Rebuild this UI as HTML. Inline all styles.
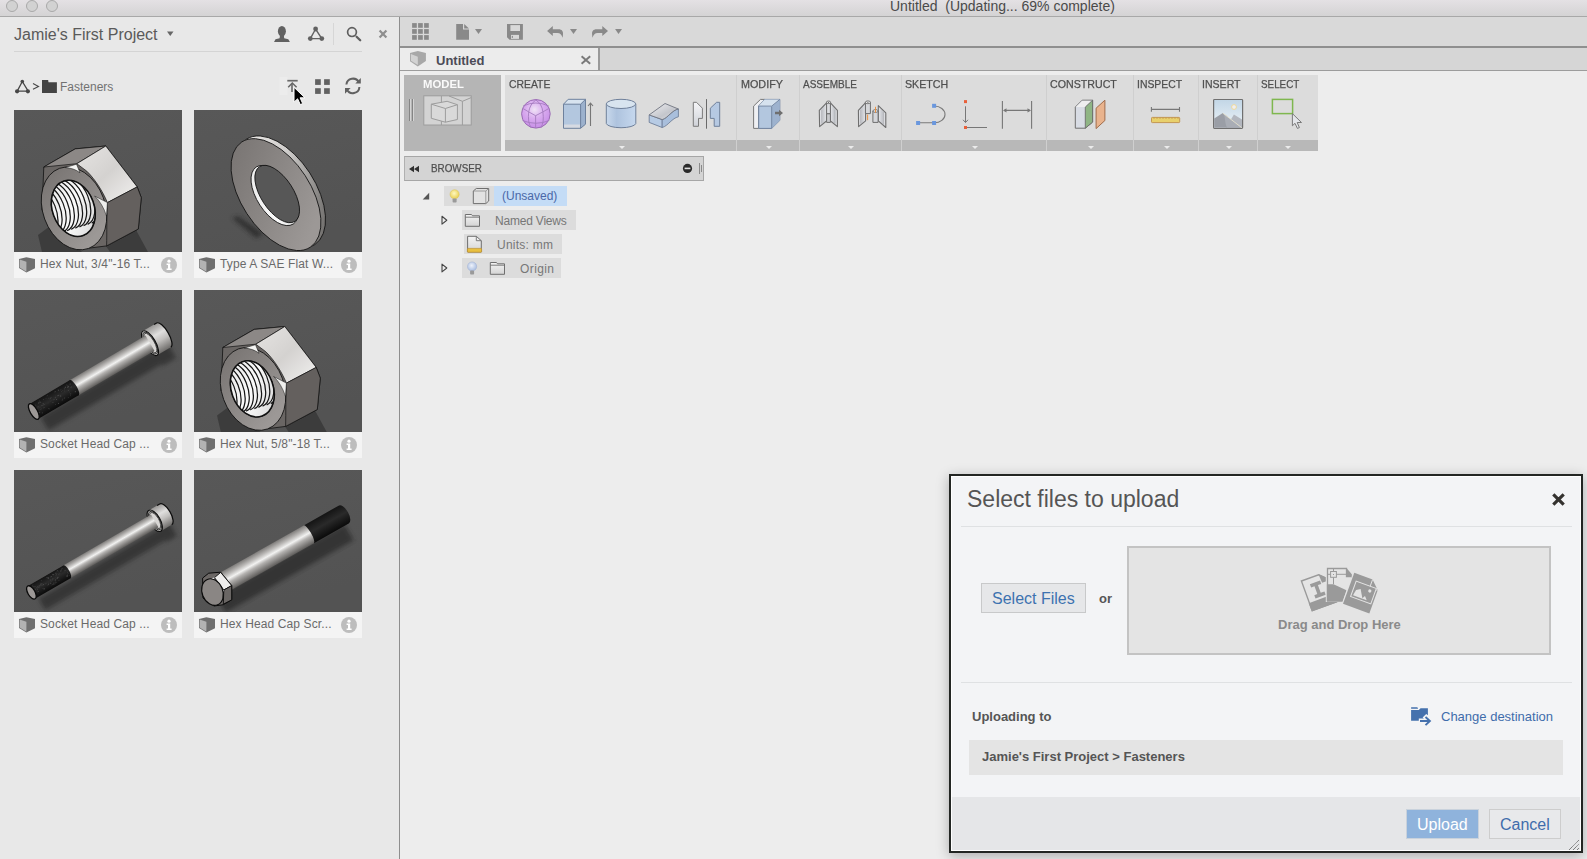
<!DOCTYPE html>
<html><head><meta charset="utf-8">
<style>
*{box-sizing:border-box;margin:0;padding:0}
html,body{width:1587px;height:859px;overflow:hidden;background:#ededed;font-family:"Liberation Sans",sans-serif;position:relative}
div,svg{position:absolute}
.t{white-space:pre;line-height:1}
#titlebar{left:0;top:0;width:1587px;height:17px;background:linear-gradient(#e4e1e4,#d4d3d4);border-bottom:1px solid #a8a8a8}
.tl{top:0;width:12px;height:12px;border-radius:50%;border:1px solid #a9a9a9;background:#d2d2d2}
#left{left:0;top:17px;width:400px;height:842px;background:#e8e8e8;border-right:1px solid #8e8e8e}
#tbar{left:400px;top:17px;width:1187px;height:31px;background:#d9d9d9;border-bottom:2px solid #8f8f8f}
#tabrow{left:400px;top:48px;width:1187px;height:23px;background:#d6d6d6;border-bottom:1px solid #9c9c9c}
#tab{left:0;top:0;width:200px;height:22px;background:#ececec;border-right:2px solid #9a9a9a}
.lbl{font-size:11px;color:#4f4f4f;-webkit-text-stroke:0.25px #4f4f4f;white-space:pre;line-height:1}
.thumb{width:168px;height:168px;background:#f4f4f4}
.thumb .img{left:0;top:0;width:168px;height:142px;background:#565656;overflow:hidden}
.thumb .cap{left:26px;top:148px;font-size:12px;letter-spacing:0.12px;color:#6a6a6a;white-space:pre;line-height:1}
.thumb .cube{left:5px;top:147px}
.thumb .info{left:147px;top:147px;width:16px;height:16px;border-radius:50%;background:#bdbdbd}
.pnl{top:75px;height:76px;background:#dcdcdc}
.pnl .bb{left:0;bottom:0;width:100%;height:11px;background:#b8b8b8}
.pnl .ar{bottom:2.5px;width:0;height:0;border-left:3px solid transparent;border-right:3px solid transparent;border-top:3.6px solid #ebebeb}
.bt{font-size:12px;color:#7a7a7a;white-space:pre;line-height:1}
</style></head><body>
<div id="titlebar">
<div class="tl" style="left:6px"></div><div class="tl" style="left:26px"></div><div class="tl" style="left:46px"></div>
<div class="t" style="left:890px;top:-1px;font-size:14px;color:#4a4a4a">Untitled  (Updating... 69% complete)</div>
</div>
<div id="left"></div>
<div class="t" style="left:14px;top:27px;font-size:16px;color:#5a5a5a">Jamie's First Project</div>
<svg style="left:164px;top:28px" width="12" height="10" viewBox="0 0 12 10"><path d="M3 3.5 H9.5 L6.25 8 Z" fill="#666"/></svg>
<svg style="left:270px;top:22px" width="125" height="26" viewBox="270 22 125 26">
 <ellipse cx="281.9" cy="31.2" rx="4" ry="5.2" fill="#616161"/>
 <path d="M280 35 H283.8 L284.2 38.2 L288.3 39.2 L289.9 41.9 H274 L275.5 39.2 L279.6 38.2 Z" fill="#616161"/>
 <path d="M315.6 29 L310.3 38.6 H321.8 Z" fill="none" stroke="#616161" stroke-width="1.4"/>
 <circle cx="315.6" cy="29" r="2.4" fill="#616161"/><circle cx="310.3" cy="38.6" r="2.4" fill="#616161"/><circle cx="321.8" cy="38.6" r="2.4" fill="#616161"/>
 <rect x="333" y="23" width="1" height="22" fill="#d6d6d6"/>
 <circle cx="352" cy="32.1" r="4.4" fill="none" stroke="#5e5e5e" stroke-width="1.7"/>
 <path d="M356.6 36.8 L360.2 40.3" stroke="#5e5e5e" stroke-width="2.3" stroke-linecap="round"/>
 <path d="M379.6 30.4 L386.4 37.6 M386.4 30.4 L379.6 37.6" stroke="#8e8e8e" stroke-width="2.2"/>
</svg>
<svg style="left:10px;top:75px" width="360" height="30" viewBox="10 75 360 30">
 <path d="M22.3 81.5 L17.2 91.2 H28.2 Z" fill="none" stroke="#474747" stroke-width="1.3"/>
 <circle cx="22.3" cy="81.5" r="1.8" fill="#474747"/><circle cx="17.1" cy="91.3" r="2.1" fill="#474747"/><circle cx="27.9" cy="91.3" r="2.1" fill="#474747"/>
 <path d="M33 83.6 L38.5 86.4 L33 89.2" fill="none" stroke="#474747" stroke-width="1.1"/>
 <path d="M42 80 H48 L49.3 82.2 H56.9 V92.9 H42 Z" fill="#444"/>
 <path d="M48 80 L49.5 82.2 L48.5 82.2 Z" fill="#e8e8e8"/>
 <rect x="279.5" y="77" width="8" height="18" fill="#ececec"/>
 <path d="M287.3 80.7 H297.7" stroke="#6a6a6a" stroke-width="1.7"/>
 <path d="M288.2 87.2 L292.3 83 L296.6 87.2" fill="none" stroke="#666" stroke-width="1.5"/><path d="M292 83.4 V92" stroke="#666" stroke-width="1.6"/>
 <rect x="315.1" y="79.2" width="5.7" height="5.7" fill="#616161"/><rect x="324.1" y="79.2" width="5.7" height="5.7" fill="#616161"/>
 <rect x="315.1" y="88.2" width="5.7" height="5.7" fill="#616161"/><rect x="324.1" y="88.2" width="5.7" height="5.7" fill="#616161"/>
 <path d="M346.4 84.5 A6.6 6.6 0 0 1 358.8 82.2" fill="none" stroke="#616161" stroke-width="2"/>
 <path d="M360.8 78 V83.6 H355.3 Z" fill="#616161"/>
 <path d="M359.4 87 A6.6 6.6 0 0 1 346.9 89.5" fill="none" stroke="#616161" stroke-width="2"/>
 <path d="M345 93.8 V88 H350.6 Z" fill="#616161"/>
</svg>
<div style="left:14px;top:51px;width:348px;height:1px;background:#d4d4d4"></div>
<div class="t" style="left:60px;top:81px;font-size:12px;color:#727272">Fasteners</div>
<div class="thumb" style="left:14px;top:110px"><div class="img"><svg width="168" height="142" viewBox="0 0 168 142" style="left:0;top:0"><defs>
<linearGradient id="tbg" x1="0" y1="0" x2="0.3" y2="1"><stop offset="0" stop-color="#585858"/><stop offset="1" stop-color="#535353"/></linearGradient>
<filter id="blura" x="-20%" y="-20%" width="140%" height="140%"><feGaussianBlur stdDeviation="2.2"/></filter>
<linearGradient id="shafta" x1="0" y1="0" x2="0" y2="1"><stop offset="0" stop-color="#7e7c7a"/><stop offset="0.25" stop-color="#bcbab8"/><stop offset="0.45" stop-color="#f2f2f1"/><stop offset="0.62" stop-color="#b4b2b0"/><stop offset="1" stop-color="#5e5c5a"/></linearGradient>
<linearGradient id="heada" x1="0" y1="0" x2="0" y2="1"><stop offset="0" stop-color="#9a9896"/><stop offset="0.35" stop-color="#e0dfde"/><stop offset="0.6" stop-color="#c2c0be"/><stop offset="1" stop-color="#6e6c6a"/></linearGradient>
<linearGradient id="thra" x1="0" y1="0" x2="0" y2="1"><stop offset="0" stop-color="#141414"/><stop offset="0.45" stop-color="#2a2a2a"/><stop offset="1" stop-color="#0a0a0a"/></linearGradient>
<linearGradient id="topfa" x1="0" y1="0" x2="1" y2="1"><stop offset="0" stop-color="#e6e4e2"/><stop offset="0.5" stop-color="#d4d2d0"/><stop offset="1" stop-color="#f2f1f0"/></linearGradient>
<linearGradient id="wfacea" x1="0" y1="0" x2="0.4" y2="1"><stop offset="0" stop-color="#75716f"/><stop offset="1" stop-color="#9c9896"/></linearGradient>
<linearGradient id="wedgea" x1="0.3" y1="0" x2="0.9" y2="1"><stop offset="0" stop-color="#f0eeec"/><stop offset="0.45" stop-color="#d0cecc"/><stop offset="0.7" stop-color="#9a9896"/><stop offset="1" stop-color="#5a5856"/></linearGradient>
<linearGradient id="holea" x1="0" y1="0" x2="1" y2="1"><stop offset="0" stop-color="#e8e8e8"/><stop offset="0.5" stop-color="#fafafa"/><stop offset="1" stop-color="#d0d0d0"/></linearGradient>
<clipPath id="hca"><ellipse cx="59.3" cy="98.4" rx="20.9" ry="28.9" transform="rotate(-20 59.3 98.4)"/></clipPath>
</defs><rect width="168" height="142" fill="url(#tbg)"/><g transform="translate(0,0)"><path d="M24 125 L39.5 113.5 L68 142 L28 142 Z" fill="#3c3c3c"/><path d="M92 136 L122 120 L134 142 L96 142 Z" fill="#3c3c3c"/><path d="M29.8 57 L61.2 38.9 L91.8 36 L123.2 76.9 L127.3 87.6 L124.3 119 L92.6 135.9 L62.8 139.7 L28 100 Z" fill="#6a6664" stroke="#111" stroke-width="0.8" stroke-linejoin="round"/><path d="M29.8 57 L61.2 38.9 L91.8 36 L62.8 53.7 Z" fill="#8c8886" stroke="#111" stroke-width="0.7"/><path d="M62.8 53.7 L91.8 36 L123.2 76.9 L93.4 92.6 C90 84 82 70 72.8 61.2 Z" fill="url(#topfa)" stroke="#111" stroke-width="0.7"/><path d="M93.4 92.6 L123.2 76.9 L127.3 87.6 L124.3 119 L92.6 135.9 C93 122 92.5 105 93.4 92.6 Z" fill="#64605e" stroke="#111" stroke-width="0.7"/><ellipse cx="60" cy="98.4" rx="31.2" ry="42.6" transform="rotate(-20 60 98.4)" fill="url(#wfacea)" stroke="#111" stroke-width="0.8"/><path d="M51.2 57.6 L62.5 54.2 L66 62.8 C62 59.5 56.5 57.8 51.2 57.6 Z" fill="#f4f4f2" stroke="#111" stroke-width="0.5"/><path d="M80.6 86 L93.4 92.6 L92.5 106 C90 98 86 91 80.6 86 Z" fill="#efefed" stroke="#111" stroke-width="0.5"/><ellipse cx="59.3" cy="98.4" rx="20.9" ry="28.9" transform="rotate(-20 59.3 98.4)" fill="#f0f0f0" stroke="#111" stroke-width="0.9"/><g clip-path="url(#hca)" fill="none" stroke="#161616" stroke-width="1.25"><ellipse cx="59.3" cy="98.4" rx="20.9" ry="28.9" transform="rotate(-20 59.3 98.4)" fill="url(#holea)" stroke="none"/><path d="M27.0 75.5 A15 26 0 0 1 27.0 127.5" transform="rotate(-22 27.0 101.5)"/><path d="M31.1 74.2 A15 26 0 0 1 31.1 126.2" transform="rotate(-22 31.1 100.2)"/><path d="M35.2 73.0 A15 26 0 0 1 35.2 125.0" transform="rotate(-22 35.2 99.0)"/><path d="M39.3 71.8 A15 26 0 0 1 39.3 123.8" transform="rotate(-22 39.3 97.8)"/><path d="M43.4 70.5 A15 26 0 0 1 43.4 122.5" transform="rotate(-22 43.4 96.5)"/><path d="M47.5 69.2 A15 26 0 0 1 47.5 121.2" transform="rotate(-22 47.5 95.2)"/><path d="M51.6 68.0 A15 26 0 0 1 51.6 120.0" transform="rotate(-22 51.6 94.0)"/><path d="M55.7 66.8 A15 26 0 0 1 55.7 118.8" transform="rotate(-22 55.7 92.8)"/><path d="M59.8 65.5 A15 26 0 0 1 59.8 117.5" transform="rotate(-22 59.8 91.5)"/><path d="M63.9 64.2 A15 26 0 0 1 63.9 116.2" transform="rotate(-22 63.9 90.2)"/><path d="M68.0 63.0 A15 26 0 0 1 68.0 115.0" transform="rotate(-22 68.0 89.0)"/><path d="M72.1 61.8 A15 26 0 0 1 72.1 113.8" transform="rotate(-22 72.1 87.8)"/><path d="M76.2 60.5 A15 26 0 0 1 76.2 112.5" transform="rotate(-22 76.2 86.5)"/></g><ellipse cx="59.3" cy="98.4" rx="20.9" ry="28.9" transform="rotate(-20 59.3 98.4)" fill="none" stroke="#111" stroke-width="1.6"/></g></svg></div><svg class="cube" width="18" height="16" viewBox="0 0 18 16" style="left:4px;top:147px"><path d="M1 2 L8.4 0.3 L17 2 V11.2 L8.4 15.6 L1 11 Z" fill="#6f6f6f"/><path d="M1.6 2.6 L8.4 4.8 V14.8 L1.6 10.6 Z" fill="#b3b3b3"/></svg><div class="cap">Hex Nut, 3/4"-16 T...</div><div class="info"><svg width="16" height="16" viewBox="0 0 16 16" style="left:0;top:0"><circle cx="8" cy="4.2" r="1.6" fill="#fff"/><path d="M5.6 6.6 H9.2 V11.6 H10.6 V13 H5.6 V11.6 H7 V8 H5.6Z" fill="#fff"/></svg></div></div>
<div class="thumb" style="left:194px;top:110px"><div class="img"><svg width="168" height="142" viewBox="0 0 168 142" style="left:0;top:0"><defs>
<linearGradient id="tbg" x1="0" y1="0" x2="0.3" y2="1"><stop offset="0" stop-color="#585858"/><stop offset="1" stop-color="#535353"/></linearGradient>
<filter id="blurb" x="-20%" y="-20%" width="140%" height="140%"><feGaussianBlur stdDeviation="2.2"/></filter>
<linearGradient id="shaftb" x1="0" y1="0" x2="0" y2="1"><stop offset="0" stop-color="#7e7c7a"/><stop offset="0.25" stop-color="#bcbab8"/><stop offset="0.45" stop-color="#f2f2f1"/><stop offset="0.62" stop-color="#b4b2b0"/><stop offset="1" stop-color="#5e5c5a"/></linearGradient>
<linearGradient id="headb" x1="0" y1="0" x2="0" y2="1"><stop offset="0" stop-color="#9a9896"/><stop offset="0.35" stop-color="#e0dfde"/><stop offset="0.6" stop-color="#c2c0be"/><stop offset="1" stop-color="#6e6c6a"/></linearGradient>
<linearGradient id="thrb" x1="0" y1="0" x2="0" y2="1"><stop offset="0" stop-color="#141414"/><stop offset="0.45" stop-color="#2a2a2a"/><stop offset="1" stop-color="#0a0a0a"/></linearGradient>
<linearGradient id="topfb" x1="0" y1="0" x2="1" y2="1"><stop offset="0" stop-color="#e6e4e2"/><stop offset="0.5" stop-color="#d4d2d0"/><stop offset="1" stop-color="#f2f1f0"/></linearGradient>
<linearGradient id="wfaceb" x1="0" y1="0" x2="0.4" y2="1"><stop offset="0" stop-color="#75716f"/><stop offset="1" stop-color="#9c9896"/></linearGradient>
<linearGradient id="wedgeb" x1="0.3" y1="0" x2="0.9" y2="1"><stop offset="0" stop-color="#f0eeec"/><stop offset="0.45" stop-color="#d0cecc"/><stop offset="0.7" stop-color="#9a9896"/><stop offset="1" stop-color="#5a5856"/></linearGradient>
<linearGradient id="holeb" x1="0" y1="0" x2="1" y2="1"><stop offset="0" stop-color="#e8e8e8"/><stop offset="0.5" stop-color="#fafafa"/><stop offset="1" stop-color="#d0d0d0"/></linearGradient>
<clipPath id="hcb"><ellipse cx="59.3" cy="98.4" rx="20.9" ry="28.9" transform="rotate(-20 59.3 98.4)"/></clipPath>
</defs><rect width="168" height="142" fill="url(#tbg)"/><path d="M38 108 L44 106 L70 124 L62 128 Z" fill="#2a2a2a" opacity="0.8" filter="url(#blurb)"/><ellipse cx="86.6" cy="81.9" rx="34.8" ry="62.8" transform="rotate(-33 86.6 81.9)" fill="url(#wedgeb)" stroke="#111" stroke-width="0.8"/><ellipse cx="82" cy="84.6" rx="34.8" ry="62.8" transform="rotate(-33 82 84.6)" fill="url(#wfaceb)" stroke="#111" stroke-width="0.8"/><ellipse cx="80.75" cy="85.5" rx="17.7" ry="34" transform="rotate(-33 80.75 85.5)" fill="url(#holeb)" stroke="#111" stroke-width="0.8"/><ellipse cx="83.2" cy="84" rx="16.2" ry="32.6" transform="rotate(-33 83.2 84)" fill="#575757" stroke="#111" stroke-width="0.8"/></svg></div><svg class="cube" width="18" height="16" viewBox="0 0 18 16" style="left:4px;top:147px"><path d="M1 2 L8.4 0.3 L17 2 V11.2 L8.4 15.6 L1 11 Z" fill="#6f6f6f"/><path d="M1.6 2.6 L8.4 4.8 V14.8 L1.6 10.6 Z" fill="#b3b3b3"/></svg><div class="cap">Type A SAE Flat W...</div><div class="info"><svg width="16" height="16" viewBox="0 0 16 16" style="left:0;top:0"><circle cx="8" cy="4.2" r="1.6" fill="#fff"/><path d="M5.6 6.6 H9.2 V11.6 H10.6 V13 H5.6 V11.6 H7 V8 H5.6Z" fill="#fff"/></svg></div></div>
<div class="thumb" style="left:14px;top:290px"><div class="img"><svg width="168" height="142" viewBox="0 0 168 142" style="left:0;top:0"><defs>
<linearGradient id="tbg" x1="0" y1="0" x2="0.3" y2="1"><stop offset="0" stop-color="#585858"/><stop offset="1" stop-color="#535353"/></linearGradient>
<filter id="blurc" x="-20%" y="-20%" width="140%" height="140%"><feGaussianBlur stdDeviation="2.2"/></filter>
<linearGradient id="shaftc" x1="0" y1="0" x2="0" y2="1"><stop offset="0" stop-color="#7e7c7a"/><stop offset="0.25" stop-color="#bcbab8"/><stop offset="0.45" stop-color="#f2f2f1"/><stop offset="0.62" stop-color="#b4b2b0"/><stop offset="1" stop-color="#5e5c5a"/></linearGradient>
<linearGradient id="headc" x1="0" y1="0" x2="0" y2="1"><stop offset="0" stop-color="#9a9896"/><stop offset="0.35" stop-color="#e0dfde"/><stop offset="0.6" stop-color="#c2c0be"/><stop offset="1" stop-color="#6e6c6a"/></linearGradient>
<linearGradient id="thrc" x1="0" y1="0" x2="0" y2="1"><stop offset="0" stop-color="#141414"/><stop offset="0.45" stop-color="#2a2a2a"/><stop offset="1" stop-color="#0a0a0a"/></linearGradient>
<linearGradient id="topfc" x1="0" y1="0" x2="1" y2="1"><stop offset="0" stop-color="#e6e4e2"/><stop offset="0.5" stop-color="#d4d2d0"/><stop offset="1" stop-color="#f2f1f0"/></linearGradient>
<linearGradient id="wfacec" x1="0" y1="0" x2="0.4" y2="1"><stop offset="0" stop-color="#75716f"/><stop offset="1" stop-color="#9c9896"/></linearGradient>
<linearGradient id="wedgec" x1="0.3" y1="0" x2="0.9" y2="1"><stop offset="0" stop-color="#f0eeec"/><stop offset="0.45" stop-color="#d0cecc"/><stop offset="0.7" stop-color="#9a9896"/><stop offset="1" stop-color="#5a5856"/></linearGradient>
<linearGradient id="holec" x1="0" y1="0" x2="1" y2="1"><stop offset="0" stop-color="#e8e8e8"/><stop offset="0.5" stop-color="#fafafa"/><stop offset="1" stop-color="#d0d0d0"/></linearGradient>
<clipPath id="hcc"><ellipse cx="59.3" cy="98.4" rx="20.9" ry="28.9" transform="rotate(-20 59.3 98.4)"/></clipPath>
</defs><rect width="168" height="142" fill="url(#tbg)"/><g transform="translate(25.8,133.5) rotate(-30.45)" filter="url(#blurc)" opacity="0.7"><rect x="4" y="-5.3" width="144.7" height="15.8" fill="#2c2c2c"/><rect x="134.8" y="-8.4" width="15.9" height="21.0" fill="#2c2c2c"/></g><g transform="translate(19.8,121.5) rotate(-30.45)"><rect x="134.8" y="-14" width="15.9" height="28" fill="url(#headc)"/><path d="M150.7 -14 A5 14 0 0 1 150.7 14 H149.7 V-14 Z" fill="url(#headc)"/><path d="M147.7 -14 H150.7 A5 14 0 0 1 150.7 14" fill="none" stroke="#0c0c0c" stroke-width="1.2"/><ellipse cx="134.8" cy="0" rx="5.5" ry="14" fill="#cbc9c7" stroke="#0c0c0c" stroke-width="1.1"/><ellipse cx="135.1" cy="0" rx="4.6" ry="12.4" fill="none" stroke="#1a1a1a" stroke-width="0.8"/><ellipse cx="135.3" cy="0" rx="3.8" ry="11.0" fill="#d8d6d4" stroke="#222" stroke-width="0.7"/><rect x="0" y="-8.8" width="134.8" height="17.6" fill="url(#shaftc)"/><rect x="0" y="-8.8" width="47" height="17.6" fill="url(#thrc)"/><ellipse cx="47" cy="0" rx="2.6" ry="8.8" fill="url(#thrc)"/><rect x="44.0" y="-2.5" width="1.2" height="0.7" fill="rgb(122,122,122)" opacity="0.55"/><rect x="20.5" y="1.6" width="1.1" height="0.7" fill="rgb(110,110,110)" opacity="0.55"/><rect x="5.4" y="-2.2" width="1.3" height="0.7" fill="rgb(90,90,90)" opacity="0.55"/><rect x="7.2" y="-0.9" width="0.8" height="0.7" fill="rgb(75,75,75)" opacity="0.55"/><rect x="30.5" y="-0.7" width="1.5" height="0.7" fill="rgb(97,97,97)" opacity="0.55"/><rect x="37.7" y="-4.5" width="1.0" height="0.7" fill="rgb(88,88,88)" opacity="0.55"/><rect x="24.8" y="5.2" width="1.2" height="0.7" fill="rgb(129,129,129)" opacity="0.55"/><rect x="41.4" y="-4.0" width="1.6" height="0.7" fill="rgb(127,127,127)" opacity="0.55"/><rect x="41.8" y="-5.0" width="1.1" height="0.7" fill="rgb(96,96,96)" opacity="0.55"/><rect x="10.0" y="-4.6" width="1.1" height="0.7" fill="rgb(75,75,75)" opacity="0.55"/><rect x="16.8" y="-5.4" width="0.8" height="0.7" fill="rgb(78,78,78)" opacity="0.55"/><rect x="37.4" y="-4.0" width="0.6" height="0.7" fill="rgb(81,81,81)" opacity="0.55"/><rect x="14.0" y="-5.7" width="1.0" height="0.7" fill="rgb(99,99,99)" opacity="0.55"/><rect x="11.5" y="-1.0" width="1.2" height="0.7" fill="rgb(90,90,90)" opacity="0.55"/><rect x="25.2" y="-1.1" width="0.9" height="0.7" fill="rgb(72,72,72)" opacity="0.55"/><rect x="19.6" y="-0.8" width="0.9" height="0.7" fill="rgb(72,72,72)" opacity="0.55"/><rect x="6.1" y="5.2" width="1.1" height="0.7" fill="rgb(101,101,101)" opacity="0.55"/><rect x="44.6" y="-5.2" width="0.7" height="0.7" fill="rgb(104,104,104)" opacity="0.55"/><rect x="44.8" y="-5.8" width="1.3" height="0.7" fill="rgb(78,78,78)" opacity="0.55"/><rect x="31.3" y="-6.0" width="1.2" height="0.7" fill="rgb(113,113,113)" opacity="0.55"/><rect x="33.5" y="-3.7" width="1.1" height="0.7" fill="rgb(73,73,73)" opacity="0.55"/><rect x="40.1" y="-1.0" width="0.7" height="0.7" fill="rgb(121,121,121)" opacity="0.55"/><rect x="4.0" y="-4.9" width="1.3" height="0.7" fill="rgb(70,70,70)" opacity="0.55"/><rect x="16.3" y="-0.4" width="0.9" height="0.7" fill="rgb(75,75,75)" opacity="0.55"/><rect x="40.2" y="1.0" width="1.1" height="0.7" fill="rgb(70,70,70)" opacity="0.55"/><rect x="39.1" y="-5.1" width="1.0" height="0.7" fill="rgb(99,99,99)" opacity="0.55"/><rect x="40.6" y="-4.0" width="0.8" height="0.7" fill="rgb(98,98,98)" opacity="0.55"/><rect x="14.2" y="5.2" width="0.8" height="0.7" fill="rgb(103,103,103)" opacity="0.55"/><rect x="30.2" y="0.3" width="1.2" height="0.7" fill="rgb(101,101,101)" opacity="0.55"/><rect x="35.3" y="-3.8" width="0.8" height="0.7" fill="rgb(83,83,83)" opacity="0.55"/><rect x="25.2" y="-1.7" width="0.7" height="0.7" fill="rgb(120,120,120)" opacity="0.55"/><rect x="9.9" y="-7.3" width="1.1" height="0.7" fill="rgb(78,78,78)" opacity="0.55"/><rect x="21.3" y="-3.7" width="1.3" height="0.7" fill="rgb(86,86,86)" opacity="0.55"/><rect x="9.5" y="-1.4" width="1.4" height="0.7" fill="rgb(108,108,108)" opacity="0.55"/><rect x="11.8" y="-2.6" width="0.7" height="0.7" fill="rgb(129,129,129)" opacity="0.55"/><rect x="9.9" y="-5.7" width="0.7" height="0.7" fill="rgb(122,122,122)" opacity="0.55"/><rect x="6.7" y="1.2" width="1.5" height="0.7" fill="rgb(91,91,91)" opacity="0.55"/><rect x="12.0" y="-1.1" width="0.8" height="0.7" fill="rgb(84,84,84)" opacity="0.55"/><rect x="32.8" y="3.7" width="1.1" height="0.7" fill="rgb(110,110,110)" opacity="0.55"/><rect x="30.3" y="3.6" width="1.5" height="0.7" fill="rgb(105,105,105)" opacity="0.55"/><rect x="20.1" y="-3.0" width="1.0" height="0.7" fill="rgb(128,128,128)" opacity="0.55"/><rect x="33.3" y="-5.4" width="1.6" height="0.7" fill="rgb(80,80,80)" opacity="0.55"/><rect x="8.0" y="-5.1" width="1.2" height="0.7" fill="rgb(118,118,118)" opacity="0.55"/><rect x="41.4" y="-4.4" width="1.2" height="0.7" fill="rgb(96,96,96)" opacity="0.55"/><rect x="13.9" y="4.8" width="0.9" height="0.7" fill="rgb(105,105,105)" opacity="0.55"/><rect x="22.7" y="-0.4" width="1.5" height="0.7" fill="rgb(93,93,93)" opacity="0.55"/><rect x="29.5" y="4.6" width="1.0" height="0.7" fill="rgb(90,90,90)" opacity="0.55"/><rect x="36.2" y="5.2" width="1.1" height="0.7" fill="rgb(80,80,80)" opacity="0.55"/><rect x="40.3" y="3.2" width="0.9" height="0.7" fill="rgb(127,127,127)" opacity="0.55"/><rect x="26.4" y="-2.6" width="0.7" height="0.7" fill="rgb(72,72,72)" opacity="0.55"/><rect x="18.9" y="-4.5" width="0.7" height="0.7" fill="rgb(93,93,93)" opacity="0.55"/><rect x="18.9" y="-7.1" width="1.4" height="0.7" fill="rgb(72,72,72)" opacity="0.55"/><rect x="38.9" y="-5.5" width="1.3" height="0.7" fill="rgb(107,107,107)" opacity="0.55"/><rect x="9.3" y="-4.8" width="1.1" height="0.7" fill="rgb(100,100,100)" opacity="0.55"/><rect x="45.2" y="3.7" width="1.3" height="0.7" fill="rgb(122,122,122)" opacity="0.55"/><rect x="8.4" y="-5.8" width="1.0" height="0.7" fill="rgb(91,91,91)" opacity="0.55"/><rect x="41.3" y="-6.0" width="1.5" height="0.7" fill="rgb(73,73,73)" opacity="0.55"/><rect x="28.4" y="-1.6" width="1.2" height="0.7" fill="rgb(103,103,103)" opacity="0.55"/><rect x="25.3" y="0.7" width="1.0" height="0.7" fill="rgb(122,122,122)" opacity="0.55"/><rect x="41.5" y="-7.0" width="0.6" height="0.7" fill="rgb(88,88,88)" opacity="0.55"/><rect x="3.6" y="3.4" width="1.5" height="0.7" fill="rgb(90,90,90)" opacity="0.55"/><rect x="36.3" y="-2.5" width="1.0" height="0.7" fill="rgb(89,89,89)" opacity="0.55"/><rect x="28.5" y="-2.1" width="1.2" height="0.7" fill="rgb(102,102,102)" opacity="0.55"/><rect x="21.7" y="4.5" width="0.9" height="0.7" fill="rgb(95,95,95)" opacity="0.55"/><rect x="9.9" y="1.6" width="1.5" height="0.7" fill="rgb(83,83,83)" opacity="0.55"/><rect x="2.1" y="-2.7" width="1.3" height="0.7" fill="rgb(72,72,72)" opacity="0.55"/><rect x="27.7" y="-6.5" width="1.4" height="0.7" fill="rgb(115,115,115)" opacity="0.55"/><rect x="31.7" y="-6.8" width="0.6" height="0.7" fill="rgb(98,98,98)" opacity="0.55"/><rect x="39.3" y="4.7" width="0.8" height="0.7" fill="rgb(95,95,95)" opacity="0.55"/><rect x="2.6" y="-1.3" width="1.2" height="0.7" fill="rgb(73,73,73)" opacity="0.55"/><ellipse cx="0" cy="0" rx="3.6" ry="8.8" fill="#9c9896" stroke="#0a0a0a" stroke-width="1.3"/></g></svg></div><svg class="cube" width="18" height="16" viewBox="0 0 18 16" style="left:4px;top:147px"><path d="M1 2 L8.4 0.3 L17 2 V11.2 L8.4 15.6 L1 11 Z" fill="#6f6f6f"/><path d="M1.6 2.6 L8.4 4.8 V14.8 L1.6 10.6 Z" fill="#b3b3b3"/></svg><div class="cap">Socket Head Cap ...</div><div class="info"><svg width="16" height="16" viewBox="0 0 16 16" style="left:0;top:0"><circle cx="8" cy="4.2" r="1.6" fill="#fff"/><path d="M5.6 6.6 H9.2 V11.6 H10.6 V13 H5.6 V11.6 H7 V8 H5.6Z" fill="#fff"/></svg></div></div>
<div class="thumb" style="left:194px;top:290px"><div class="img"><svg width="168" height="142" viewBox="0 0 168 142" style="left:0;top:0"><defs>
<linearGradient id="tbg" x1="0" y1="0" x2="0.3" y2="1"><stop offset="0" stop-color="#585858"/><stop offset="1" stop-color="#535353"/></linearGradient>
<filter id="blurf" x="-20%" y="-20%" width="140%" height="140%"><feGaussianBlur stdDeviation="2.2"/></filter>
<linearGradient id="shaftf" x1="0" y1="0" x2="0" y2="1"><stop offset="0" stop-color="#7e7c7a"/><stop offset="0.25" stop-color="#bcbab8"/><stop offset="0.45" stop-color="#f2f2f1"/><stop offset="0.62" stop-color="#b4b2b0"/><stop offset="1" stop-color="#5e5c5a"/></linearGradient>
<linearGradient id="headf" x1="0" y1="0" x2="0" y2="1"><stop offset="0" stop-color="#9a9896"/><stop offset="0.35" stop-color="#e0dfde"/><stop offset="0.6" stop-color="#c2c0be"/><stop offset="1" stop-color="#6e6c6a"/></linearGradient>
<linearGradient id="thrf" x1="0" y1="0" x2="0" y2="1"><stop offset="0" stop-color="#141414"/><stop offset="0.45" stop-color="#2a2a2a"/><stop offset="1" stop-color="#0a0a0a"/></linearGradient>
<linearGradient id="topff" x1="0" y1="0" x2="1" y2="1"><stop offset="0" stop-color="#e6e4e2"/><stop offset="0.5" stop-color="#d4d2d0"/><stop offset="1" stop-color="#f2f1f0"/></linearGradient>
<linearGradient id="wfacef" x1="0" y1="0" x2="0.4" y2="1"><stop offset="0" stop-color="#75716f"/><stop offset="1" stop-color="#9c9896"/></linearGradient>
<linearGradient id="wedgef" x1="0.3" y1="0" x2="0.9" y2="1"><stop offset="0" stop-color="#f0eeec"/><stop offset="0.45" stop-color="#d0cecc"/><stop offset="0.7" stop-color="#9a9896"/><stop offset="1" stop-color="#5a5856"/></linearGradient>
<linearGradient id="holef" x1="0" y1="0" x2="1" y2="1"><stop offset="0" stop-color="#e8e8e8"/><stop offset="0.5" stop-color="#fafafa"/><stop offset="1" stop-color="#d0d0d0"/></linearGradient>
<clipPath id="hcf"><ellipse cx="59.3" cy="98.4" rx="20.9" ry="28.9" transform="rotate(-20 59.3 98.4)"/></clipPath>
</defs><rect width="168" height="142" fill="url(#tbg)"/><g transform="translate(-1,0.5)"><path d="M24 125 L39.5 113.5 L68 142 L28 142 Z" fill="#3c3c3c"/><path d="M92 136 L122 120 L134 142 L96 142 Z" fill="#3c3c3c"/><path d="M29.8 57 L61.2 38.9 L91.8 36 L123.2 76.9 L127.3 87.6 L124.3 119 L92.6 135.9 L62.8 139.7 L28 100 Z" fill="#6a6664" stroke="#111" stroke-width="0.8" stroke-linejoin="round"/><path d="M29.8 57 L61.2 38.9 L91.8 36 L62.8 53.7 Z" fill="#8c8886" stroke="#111" stroke-width="0.7"/><path d="M62.8 53.7 L91.8 36 L123.2 76.9 L93.4 92.6 C90 84 82 70 72.8 61.2 Z" fill="url(#topff)" stroke="#111" stroke-width="0.7"/><path d="M93.4 92.6 L123.2 76.9 L127.3 87.6 L124.3 119 L92.6 135.9 C93 122 92.5 105 93.4 92.6 Z" fill="#64605e" stroke="#111" stroke-width="0.7"/><ellipse cx="60" cy="98.4" rx="31.2" ry="42.6" transform="rotate(-20 60 98.4)" fill="url(#wfacef)" stroke="#111" stroke-width="0.8"/><path d="M51.2 57.6 L62.5 54.2 L66 62.8 C62 59.5 56.5 57.8 51.2 57.6 Z" fill="#f4f4f2" stroke="#111" stroke-width="0.5"/><path d="M80.6 86 L93.4 92.6 L92.5 106 C90 98 86 91 80.6 86 Z" fill="#efefed" stroke="#111" stroke-width="0.5"/><ellipse cx="59.3" cy="98.4" rx="20.9" ry="28.9" transform="rotate(-20 59.3 98.4)" fill="#f0f0f0" stroke="#111" stroke-width="0.9"/><g clip-path="url(#hcf)" fill="none" stroke="#161616" stroke-width="1.25"><ellipse cx="59.3" cy="98.4" rx="20.9" ry="28.9" transform="rotate(-20 59.3 98.4)" fill="url(#holef)" stroke="none"/><path d="M27.0 75.5 A15 26 0 0 1 27.0 127.5" transform="rotate(-22 27.0 101.5)"/><path d="M31.1 74.2 A15 26 0 0 1 31.1 126.2" transform="rotate(-22 31.1 100.2)"/><path d="M35.2 73.0 A15 26 0 0 1 35.2 125.0" transform="rotate(-22 35.2 99.0)"/><path d="M39.3 71.8 A15 26 0 0 1 39.3 123.8" transform="rotate(-22 39.3 97.8)"/><path d="M43.4 70.5 A15 26 0 0 1 43.4 122.5" transform="rotate(-22 43.4 96.5)"/><path d="M47.5 69.2 A15 26 0 0 1 47.5 121.2" transform="rotate(-22 47.5 95.2)"/><path d="M51.6 68.0 A15 26 0 0 1 51.6 120.0" transform="rotate(-22 51.6 94.0)"/><path d="M55.7 66.8 A15 26 0 0 1 55.7 118.8" transform="rotate(-22 55.7 92.8)"/><path d="M59.8 65.5 A15 26 0 0 1 59.8 117.5" transform="rotate(-22 59.8 91.5)"/><path d="M63.9 64.2 A15 26 0 0 1 63.9 116.2" transform="rotate(-22 63.9 90.2)"/><path d="M68.0 63.0 A15 26 0 0 1 68.0 115.0" transform="rotate(-22 68.0 89.0)"/><path d="M72.1 61.8 A15 26 0 0 1 72.1 113.8" transform="rotate(-22 72.1 87.8)"/><path d="M76.2 60.5 A15 26 0 0 1 76.2 112.5" transform="rotate(-22 76.2 86.5)"/></g><ellipse cx="59.3" cy="98.4" rx="20.9" ry="28.9" transform="rotate(-20 59.3 98.4)" fill="none" stroke="#111" stroke-width="1.6"/></g></svg></div><svg class="cube" width="18" height="16" viewBox="0 0 18 16" style="left:4px;top:147px"><path d="M1 2 L8.4 0.3 L17 2 V11.2 L8.4 15.6 L1 11 Z" fill="#6f6f6f"/><path d="M1.6 2.6 L8.4 4.8 V14.8 L1.6 10.6 Z" fill="#b3b3b3"/></svg><div class="cap">Hex Nut, 5/8"-18 T...</div><div class="info"><svg width="16" height="16" viewBox="0 0 16 16" style="left:0;top:0"><circle cx="8" cy="4.2" r="1.6" fill="#fff"/><path d="M5.6 6.6 H9.2 V11.6 H10.6 V13 H5.6 V11.6 H7 V8 H5.6Z" fill="#fff"/></svg></div></div>
<div class="thumb" style="left:14px;top:470px"><div class="img"><svg width="168" height="142" viewBox="0 0 168 142" style="left:0;top:0"><defs>
<linearGradient id="tbg" x1="0" y1="0" x2="0.3" y2="1"><stop offset="0" stop-color="#585858"/><stop offset="1" stop-color="#535353"/></linearGradient>
<filter id="blurd" x="-20%" y="-20%" width="140%" height="140%"><feGaussianBlur stdDeviation="2.2"/></filter>
<linearGradient id="shaftd" x1="0" y1="0" x2="0" y2="1"><stop offset="0" stop-color="#7e7c7a"/><stop offset="0.25" stop-color="#bcbab8"/><stop offset="0.45" stop-color="#f2f2f1"/><stop offset="0.62" stop-color="#b4b2b0"/><stop offset="1" stop-color="#5e5c5a"/></linearGradient>
<linearGradient id="headd" x1="0" y1="0" x2="0" y2="1"><stop offset="0" stop-color="#9a9896"/><stop offset="0.35" stop-color="#e0dfde"/><stop offset="0.6" stop-color="#c2c0be"/><stop offset="1" stop-color="#6e6c6a"/></linearGradient>
<linearGradient id="thrd" x1="0" y1="0" x2="0" y2="1"><stop offset="0" stop-color="#141414"/><stop offset="0.45" stop-color="#2a2a2a"/><stop offset="1" stop-color="#0a0a0a"/></linearGradient>
<linearGradient id="topfd" x1="0" y1="0" x2="1" y2="1"><stop offset="0" stop-color="#e6e4e2"/><stop offset="0.5" stop-color="#d4d2d0"/><stop offset="1" stop-color="#f2f1f0"/></linearGradient>
<linearGradient id="wfaced" x1="0" y1="0" x2="0.4" y2="1"><stop offset="0" stop-color="#75716f"/><stop offset="1" stop-color="#9c9896"/></linearGradient>
<linearGradient id="wedged" x1="0.3" y1="0" x2="0.9" y2="1"><stop offset="0" stop-color="#f0eeec"/><stop offset="0.45" stop-color="#d0cecc"/><stop offset="0.7" stop-color="#9a9896"/><stop offset="1" stop-color="#5a5856"/></linearGradient>
<linearGradient id="holed" x1="0" y1="0" x2="1" y2="1"><stop offset="0" stop-color="#e8e8e8"/><stop offset="0.5" stop-color="#fafafa"/><stop offset="1" stop-color="#d0d0d0"/></linearGradient>
<clipPath id="hcd"><ellipse cx="59.3" cy="98.4" rx="20.9" ry="28.9" transform="rotate(-20 59.3 98.4)"/></clipPath>
</defs><rect width="168" height="142" fill="url(#tbg)"/><g transform="translate(23.4,134.4) rotate(-30.14)" filter="url(#blurd)" opacity="0.7"><rect x="4" y="-4.4" width="149.3" height="13.3" fill="#2c2c2c"/><rect x="142.6" y="-7.2" width="12.7" height="18.0" fill="#2c2c2c"/></g><g transform="translate(17.4,122.4) rotate(-30.14)"><rect x="142.6" y="-12" width="12.7" height="24" fill="url(#headd)"/><path d="M155.3 -12 A5 12 0 0 1 155.3 12 H154.3 V-12 Z" fill="url(#headd)"/><path d="M152.3 -12 H155.3 A5 12 0 0 1 155.3 12" fill="none" stroke="#0c0c0c" stroke-width="1.2"/><ellipse cx="142.6" cy="0" rx="5.5" ry="12" fill="#cbc9c7" stroke="#0c0c0c" stroke-width="1.1"/><ellipse cx="142.9" cy="0" rx="4.6" ry="10.4" fill="none" stroke="#1a1a1a" stroke-width="0.8"/><ellipse cx="143.1" cy="0" rx="3.8" ry="9.0" fill="#d8d6d4" stroke="#222" stroke-width="0.7"/><rect x="0" y="-7.4" width="142.6" height="14.8" fill="url(#shaftd)"/><rect x="0" y="-7.4" width="41" height="14.8" fill="url(#thrd)"/><ellipse cx="41" cy="0" rx="2.6" ry="7.4" fill="url(#thrd)"/><rect x="24.0" y="4.1" width="1.1" height="0.7" fill="rgb(97,97,97)" opacity="0.55"/><rect x="2.7" y="2.7" width="0.9" height="0.7" fill="rgb(73,73,73)" opacity="0.55"/><rect x="2.8" y="-1.5" width="1.1" height="0.7" fill="rgb(95,95,95)" opacity="0.55"/><rect x="17.5" y="1.6" width="0.8" height="0.7" fill="rgb(92,92,92)" opacity="0.55"/><rect x="21.6" y="0.4" width="1.4" height="0.7" fill="rgb(82,82,82)" opacity="0.55"/><rect x="18.4" y="1.3" width="0.8" height="0.7" fill="rgb(126,126,126)" opacity="0.55"/><rect x="13.2" y="-1.0" width="1.6" height="0.7" fill="rgb(118,118,118)" opacity="0.55"/><rect x="32.5" y="-2.2" width="0.7" height="0.7" fill="rgb(109,109,109)" opacity="0.55"/><rect x="21.2" y="-3.8" width="1.1" height="0.7" fill="rgb(126,126,126)" opacity="0.55"/><rect x="38.9" y="2.7" width="1.3" height="0.7" fill="rgb(126,126,126)" opacity="0.55"/><rect x="40.6" y="-2.3" width="0.6" height="0.7" fill="rgb(95,95,95)" opacity="0.55"/><rect x="32.5" y="-5.9" width="1.5" height="0.7" fill="rgb(121,121,121)" opacity="0.55"/><rect x="8.6" y="-1.1" width="1.4" height="0.7" fill="rgb(106,106,106)" opacity="0.55"/><rect x="21.0" y="3.5" width="1.4" height="0.7" fill="rgb(81,81,81)" opacity="0.55"/><rect x="21.2" y="1.5" width="0.7" height="0.7" fill="rgb(114,114,114)" opacity="0.55"/><rect x="3.2" y="-4.3" width="1.5" height="0.7" fill="rgb(118,118,118)" opacity="0.55"/><rect x="29.9" y="-4.3" width="1.2" height="0.7" fill="rgb(113,113,113)" opacity="0.55"/><rect x="26.3" y="0.9" width="1.3" height="0.7" fill="rgb(115,115,115)" opacity="0.55"/><rect x="19.0" y="0.4" width="1.2" height="0.7" fill="rgb(82,82,82)" opacity="0.55"/><rect x="26.6" y="-5.0" width="1.2" height="0.7" fill="rgb(104,104,104)" opacity="0.55"/><rect x="22.5" y="3.4" width="1.3" height="0.7" fill="rgb(116,116,116)" opacity="0.55"/><rect x="23.0" y="-1.9" width="0.8" height="0.7" fill="rgb(84,84,84)" opacity="0.55"/><rect x="16.4" y="-0.5" width="0.9" height="0.7" fill="rgb(100,100,100)" opacity="0.55"/><rect x="24.2" y="-0.4" width="1.0" height="0.7" fill="rgb(96,96,96)" opacity="0.55"/><rect x="5.2" y="-3.6" width="1.5" height="0.7" fill="rgb(92,92,92)" opacity="0.55"/><rect x="12.7" y="3.1" width="0.9" height="0.7" fill="rgb(87,87,87)" opacity="0.55"/><rect x="2.1" y="-3.1" width="0.7" height="0.7" fill="rgb(101,101,101)" opacity="0.55"/><rect x="25.5" y="3.4" width="1.6" height="0.7" fill="rgb(86,86,86)" opacity="0.55"/><rect x="31.9" y="-3.6" width="1.5" height="0.7" fill="rgb(70,70,70)" opacity="0.55"/><rect x="33.2" y="-5.2" width="1.1" height="0.7" fill="rgb(73,73,73)" opacity="0.55"/><rect x="20.1" y="-5.3" width="1.2" height="0.7" fill="rgb(98,98,98)" opacity="0.55"/><rect x="40.7" y="4.2" width="0.8" height="0.7" fill="rgb(85,85,85)" opacity="0.55"/><rect x="5.6" y="2.4" width="1.4" height="0.7" fill="rgb(117,117,117)" opacity="0.55"/><rect x="38.3" y="3.7" width="1.6" height="0.7" fill="rgb(121,121,121)" opacity="0.55"/><rect x="30.2" y="-3.5" width="1.1" height="0.7" fill="rgb(101,101,101)" opacity="0.55"/><rect x="40.8" y="0.5" width="1.2" height="0.7" fill="rgb(81,81,81)" opacity="0.55"/><rect x="37.9" y="-5.7" width="1.5" height="0.7" fill="rgb(94,94,94)" opacity="0.55"/><rect x="29.6" y="0.1" width="1.5" height="0.7" fill="rgb(114,114,114)" opacity="0.55"/><rect x="27.4" y="-4.4" width="1.1" height="0.7" fill="rgb(70,70,70)" opacity="0.55"/><rect x="22.6" y="-1.1" width="0.8" height="0.7" fill="rgb(106,106,106)" opacity="0.55"/><rect x="6.5" y="-1.6" width="1.2" height="0.7" fill="rgb(105,105,105)" opacity="0.55"/><rect x="29.4" y="3.0" width="1.1" height="0.7" fill="rgb(101,101,101)" opacity="0.55"/><rect x="6.4" y="-0.1" width="0.9" height="0.7" fill="rgb(105,105,105)" opacity="0.55"/><rect x="4.7" y="-1.0" width="1.0" height="0.7" fill="rgb(100,100,100)" opacity="0.55"/><rect x="11.3" y="-1.5" width="1.4" height="0.7" fill="rgb(77,77,77)" opacity="0.55"/><rect x="14.0" y="-5.5" width="0.8" height="0.7" fill="rgb(105,105,105)" opacity="0.55"/><rect x="11.1" y="-2.3" width="1.5" height="0.7" fill="rgb(93,93,93)" opacity="0.55"/><rect x="11.6" y="2.0" width="1.3" height="0.7" fill="rgb(85,85,85)" opacity="0.55"/><rect x="27.8" y="-4.5" width="0.9" height="0.7" fill="rgb(103,103,103)" opacity="0.55"/><rect x="39.4" y="-2.3" width="0.9" height="0.7" fill="rgb(117,117,117)" opacity="0.55"/><rect x="40.5" y="1.9" width="1.2" height="0.7" fill="rgb(72,72,72)" opacity="0.55"/><rect x="24.2" y="-4.0" width="1.5" height="0.7" fill="rgb(113,113,113)" opacity="0.55"/><rect x="12.3" y="-3.6" width="0.6" height="0.7" fill="rgb(87,87,87)" opacity="0.55"/><rect x="12.8" y="-2.6" width="1.1" height="0.7" fill="rgb(125,125,125)" opacity="0.55"/><rect x="21.0" y="-4.6" width="1.5" height="0.7" fill="rgb(116,116,116)" opacity="0.55"/><rect x="36.1" y="-4.7" width="1.6" height="0.7" fill="rgb(128,128,128)" opacity="0.55"/><rect x="20.7" y="1.3" width="0.9" height="0.7" fill="rgb(106,106,106)" opacity="0.55"/><rect x="30.8" y="-5.2" width="0.8" height="0.7" fill="rgb(83,83,83)" opacity="0.55"/><rect x="24.8" y="-1.3" width="1.0" height="0.7" fill="rgb(100,100,100)" opacity="0.55"/><rect x="9.7" y="-2.2" width="0.9" height="0.7" fill="rgb(128,128,128)" opacity="0.55"/><rect x="12.1" y="3.2" width="1.4" height="0.7" fill="rgb(105,105,105)" opacity="0.55"/><rect x="33.8" y="-2.7" width="1.1" height="0.7" fill="rgb(88,88,88)" opacity="0.55"/><rect x="29.3" y="-2.7" width="1.0" height="0.7" fill="rgb(73,73,73)" opacity="0.55"/><rect x="35.2" y="-3.8" width="1.6" height="0.7" fill="rgb(85,85,85)" opacity="0.55"/><rect x="26.3" y="1.9" width="0.7" height="0.7" fill="rgb(106,106,106)" opacity="0.55"/><rect x="28.4" y="0.7" width="1.4" height="0.7" fill="rgb(118,118,118)" opacity="0.55"/><rect x="27.2" y="-1.0" width="0.9" height="0.7" fill="rgb(71,71,71)" opacity="0.55"/><rect x="8.0" y="-2.3" width="1.3" height="0.7" fill="rgb(108,108,108)" opacity="0.55"/><rect x="4.0" y="-6.0" width="1.4" height="0.7" fill="rgb(82,82,82)" opacity="0.55"/><rect x="23.8" y="2.7" width="1.0" height="0.7" fill="rgb(92,92,92)" opacity="0.55"/><ellipse cx="0" cy="0" rx="3.6" ry="7.4" fill="#9c9896" stroke="#0a0a0a" stroke-width="1.3"/></g></svg></div><svg class="cube" width="18" height="16" viewBox="0 0 18 16" style="left:4px;top:147px"><path d="M1 2 L8.4 0.3 L17 2 V11.2 L8.4 15.6 L1 11 Z" fill="#6f6f6f"/><path d="M1.6 2.6 L8.4 4.8 V14.8 L1.6 10.6 Z" fill="#b3b3b3"/></svg><div class="cap">Socket Head Cap ...</div><div class="info"><svg width="16" height="16" viewBox="0 0 16 16" style="left:0;top:0"><circle cx="8" cy="4.2" r="1.6" fill="#fff"/><path d="M5.6 6.6 H9.2 V11.6 H10.6 V13 H5.6 V11.6 H7 V8 H5.6Z" fill="#fff"/></svg></div></div>
<div class="thumb" style="left:194px;top:470px"><div class="img"><svg width="168" height="142" viewBox="0 0 168 142" style="left:0;top:0"><defs>
<linearGradient id="tbg" x1="0" y1="0" x2="0.3" y2="1"><stop offset="0" stop-color="#585858"/><stop offset="1" stop-color="#535353"/></linearGradient>
<filter id="blure" x="-20%" y="-20%" width="140%" height="140%"><feGaussianBlur stdDeviation="2.2"/></filter>
<linearGradient id="shafte" x1="0" y1="0" x2="0" y2="1"><stop offset="0" stop-color="#7e7c7a"/><stop offset="0.25" stop-color="#bcbab8"/><stop offset="0.45" stop-color="#f2f2f1"/><stop offset="0.62" stop-color="#b4b2b0"/><stop offset="1" stop-color="#5e5c5a"/></linearGradient>
<linearGradient id="heade" x1="0" y1="0" x2="0" y2="1"><stop offset="0" stop-color="#9a9896"/><stop offset="0.35" stop-color="#e0dfde"/><stop offset="0.6" stop-color="#c2c0be"/><stop offset="1" stop-color="#6e6c6a"/></linearGradient>
<linearGradient id="thre" x1="0" y1="0" x2="0" y2="1"><stop offset="0" stop-color="#141414"/><stop offset="0.45" stop-color="#2a2a2a"/><stop offset="1" stop-color="#0a0a0a"/></linearGradient>
<linearGradient id="topfe" x1="0" y1="0" x2="1" y2="1"><stop offset="0" stop-color="#e6e4e2"/><stop offset="0.5" stop-color="#d4d2d0"/><stop offset="1" stop-color="#f2f1f0"/></linearGradient>
<linearGradient id="wfacee" x1="0" y1="0" x2="0.4" y2="1"><stop offset="0" stop-color="#75716f"/><stop offset="1" stop-color="#9c9896"/></linearGradient>
<linearGradient id="wedgee" x1="0.3" y1="0" x2="0.9" y2="1"><stop offset="0" stop-color="#f0eeec"/><stop offset="0.45" stop-color="#d0cecc"/><stop offset="0.7" stop-color="#9a9896"/><stop offset="1" stop-color="#5a5856"/></linearGradient>
<linearGradient id="holee" x1="0" y1="0" x2="1" y2="1"><stop offset="0" stop-color="#e8e8e8"/><stop offset="0.5" stop-color="#fafafa"/><stop offset="1" stop-color="#d0d0d0"/></linearGradient>
<clipPath id="hce"><ellipse cx="59.3" cy="98.4" rx="20.9" ry="28.9" transform="rotate(-20 59.3 98.4)"/></clipPath>
</defs><rect width="168" height="142" fill="url(#tbg)"/><g transform="translate(26.2,133) rotate(-29.5)" filter="url(#blure)" opacity="0.75"><rect x="0" y="-7.2" width="147" height="18.5" fill="#2a2a2a"/></g><g transform="translate(18.2,119) rotate(-29.5)"><rect x="10" y="-10.3" width="101" height="20.6" fill="url(#shafte)"/><path d="M111 -10.3 H151 A5 10.3 0 0 1 151 10.3 H111 Z" fill="url(#thre)"/><ellipse cx="111" cy="0" rx="2.5" ry="10.3" fill="url(#shafte)"/></g><path d="M8.6 108.1 L14.7 103.2 L26.7 102.2 L37.7 115.6 L37.7 129.8 L29.3 134.7 L20 136 L9 128 Z" fill="#6c6866" stroke="#0a0a0a" stroke-width="1" stroke-linejoin="round"/><path d="M20.5 107.6 L26.7 102.4 L37.7 115.6 L29.8 120 Z" fill="#eeedec" stroke="#0a0a0a" stroke-width="0.9" stroke-linejoin="round"/><path d="M29.8 120 L37.7 115.6 L37.7 129.8 L29.3 134.2 Z" fill="#6a6664" stroke="#0a0a0a" stroke-width="0.9" stroke-linejoin="round"/><path d="M17.6 108.2 L20.5 107.6 L19.6 110.6 Z M26.9 119.6 L29.8 120 L28.9 122.5 Z" fill="#f4f4f4"/><ellipse cx="18.5" cy="122.1" rx="10.3" ry="13.7" transform="rotate(-22 18.5 122.1)" fill="#8a8684" stroke="#0a0a0a" stroke-width="1.1"/></svg></div><svg class="cube" width="18" height="16" viewBox="0 0 18 16" style="left:4px;top:147px"><path d="M1 2 L8.4 0.3 L17 2 V11.2 L8.4 15.6 L1 11 Z" fill="#6f6f6f"/><path d="M1.6 2.6 L8.4 4.8 V14.8 L1.6 10.6 Z" fill="#b3b3b3"/></svg><div class="cap">Hex Head Cap Scr...</div><div class="info"><svg width="16" height="16" viewBox="0 0 16 16" style="left:0;top:0"><circle cx="8" cy="4.2" r="1.6" fill="#fff"/><path d="M5.6 6.6 H9.2 V11.6 H10.6 V13 H5.6 V11.6 H7 V8 H5.6Z" fill="#fff"/></svg></div></div>
<div id="tbar"></div>
<div id="tabrow"><div id="tab"></div></div>
<svg style="left:400px;top:17px" width="240" height="55" viewBox="400 17 240 55">
 <g fill="#898989">
  <rect x="412.1" y="23.1" width="4.7" height="4.7"/><rect x="418.1" y="23.1" width="4.7" height="4.7"/><rect x="424.1" y="23.1" width="4.7" height="4.7"/>
  <rect x="412.1" y="29.1" width="4.7" height="4.7"/><rect x="418.1" y="29.1" width="4.7" height="4.7"/><rect x="424.1" y="29.1" width="4.7" height="4.7"/>
  <rect x="412.1" y="35.1" width="4.7" height="4.7"/><rect x="418.1" y="35.1" width="4.7" height="4.7"/><rect x="424.1" y="35.1" width="4.7" height="4.7"/>
  <path d="M456.2 24.1 H463 V29.4 H469 V39.8 H456.2 Z"/>
  <path d="M464.2 24.1 L469 28.6 H464.2 Z"/>
  <path d="M475 29 H482 L478.5 34 Z"/>
  <path d="M507 23.9 H522.9 V39.8 H509.6 L507 37.2 Z"/>
  <path d="M547.1 31 L552.8 25.9 V29.3 H558.5 C562 29.3 563.3 31.5 563 34.5 L562.7 37.8 C561.5 34.5 560.2 33 557.5 33 H552.8 V36.1 Z"/>
  <path d="M570 29 H577 L573.5 34 Z"/>
  <path d="M608 31 L602.3 25.9 V29.3 H596.6 C593.1 29.3 591.8 31.5 592.1 34.5 L592.4 37.8 C593.6 34.5 594.9 33 597.6 33 H602.3 V36.1 Z"/>
  <path d="M615.1 29 H622 L618.5 34 Z"/>
 </g>
 <rect x="510.4" y="25.1" width="9.6" height="5.9" fill="#d9d9d9"/>
 <rect x="511" y="34.9" width="8" height="4" fill="#d9d9d9"/>
 <rect x="511.8" y="35.9" width="1.1" height="2" fill="#898989"/>
 <path d="M410 53 L417.8 51.1 L425.9 53.1 V61.1 L417.8 66.4 L410 61.3 Z" fill="#a8a8a8"/>
 <path d="M410.9 54.1 L417.8 56.7 V64.9 L410.9 60.8 Z" fill="#d2d2d2"/>
 <path d="M581.6 56.3 L590.2 63.7 M590.2 56.3 L581.6 63.7" stroke="#7a7a7a" stroke-width="2"/>
</svg>
<div class="t" style="left:436px;top:54px;font-size:13px;font-weight:bold;color:#4b4b57">Untitled</div>
<div class="pnl" style="left:404px;width:97px;background:#b5b5b5"></div>
<div class="t" style="left:423px;top:79px;font-size:11px;font-weight:bold;color:#fafafa;transform:scaleX(1.03);transform-origin:0 0">MODEL</div>
<div class="pnl" style="left:505px;width:231px;"><div class="bb"></div><div class="ar" style="left:114px"></div></div>
<div class="lbl" style="left:509px;top:79px;transform:scaleX(0.944);transform-origin:0 0">CREATE</div>
<div class="pnl" style="left:736px;width:63px;"><div class="bb"></div><div class="ar" style="left:30px"></div></div>
<div style="left:736px;top:75px;width:1px;height:76px;background:#cfcfcf"></div>
<div class="lbl" style="left:741px;top:79px;transform:scaleX(0.98);transform-origin:0 0">MODIFY</div>
<div class="pnl" style="left:799px;width:102px;"><div class="bb"></div><div class="ar" style="left:49px"></div></div>
<div style="left:799px;top:75px;width:1px;height:76px;background:#cfcfcf"></div>
<div class="lbl" style="left:803px;top:79px;transform:scaleX(0.91);transform-origin:0 0">ASSEMBLE</div>
<div class="pnl" style="left:901px;width:145px;"><div class="bb"></div><div class="ar" style="left:71px"></div></div>
<div style="left:901px;top:75px;width:1px;height:76px;background:#cfcfcf"></div>
<div class="lbl" style="left:905px;top:79px;transform:scaleX(0.97);transform-origin:0 0">SKETCH</div>
<div class="pnl" style="left:1046px;width:87px;"><div class="bb"></div><div class="ar" style="left:42px"></div></div>
<div style="left:1046px;top:75px;width:1px;height:76px;background:#cfcfcf"></div>
<div class="lbl" style="left:1050px;top:79px;transform:scaleX(0.968);transform-origin:0 0">CONSTRUCT</div>
<div class="pnl" style="left:1133px;width:65px;"><div class="bb"></div><div class="ar" style="left:31px"></div></div>
<div style="left:1133px;top:75px;width:1px;height:76px;background:#cfcfcf"></div>
<div class="lbl" style="left:1137px;top:79px;transform:scaleX(0.946);transform-origin:0 0">INSPECT</div>
<div class="pnl" style="left:1198px;width:59px;"><div class="bb"></div><div class="ar" style="left:28px"></div></div>
<div style="left:1198px;top:75px;width:1px;height:76px;background:#cfcfcf"></div>
<div class="lbl" style="left:1202px;top:79px;transform:scaleX(0.96);transform-origin:0 0">INSERT</div>
<div class="pnl" style="left:1257px;width:61px;"><div class="bb"></div><div class="ar" style="left:28px"></div></div>
<div style="left:1257px;top:75px;width:1px;height:76px;background:#cfcfcf"></div>
<div class="lbl" style="left:1261px;top:79px;transform:scaleX(0.895);transform-origin:0 0">SELECT</div>
<svg style="left:400px;top:90px" width="920" height="45" viewBox="400 90 920 45">
 <defs>
  <radialGradient id="gsph" cx="0.45" cy="0.35" r="0.7"><stop offset="0" stop-color="#efe4f5"/><stop offset="0.45" stop-color="#d9acef"/><stop offset="1" stop-color="#c58ae6"/></radialGradient>
  <linearGradient id="gcyl" x1="0" x2="1"><stop offset="0" stop-color="#c9d9ec"/><stop offset="0.35" stop-color="#aec3de"/><stop offset="1" stop-color="#c6d8ee"/></linearGradient>
  <linearGradient id="gsrf" x1="0" y1="0" x2="1" y2="1"><stop offset="0" stop-color="#f0f0f2"/><stop offset="0.6" stop-color="#c4c6cc"/><stop offset="1" stop-color="#e2e2e6"/></linearGradient>
  <linearGradient id="gwht" x1="0" y1="0" x2="0" y2="1"><stop offset="0" stop-color="#f5f5f7"/><stop offset="1" stop-color="#cfd2d8"/></linearGradient>
  <linearGradient id="gsky" x1="0" y1="0" x2="0" y2="1"><stop offset="0" stop-color="#c2d6e6"/><stop offset="1" stop-color="#eef4f8"/></linearGradient>
  <linearGradient id="gjnt" x1="0" x2="1"><stop offset="0" stop-color="#e8e9ec"/><stop offset="0.5" stop-color="#c6c8cd"/><stop offset="1" stop-color="#e6e7ea"/></linearGradient>
 </defs>
 <!-- grip -->
 <rect x="409" y="99" width="1" height="22" fill="#858585"/><rect x="410" y="99" width="1" height="22" fill="#d4d4d4"/>
 <rect x="412" y="99" width="1" height="22" fill="#858585"/><rect x="413" y="99" width="1" height="22" fill="#d4d4d4"/>
 <!-- model icon -->
 <rect x="423.8" y="95.8" width="47.4" height="29.2" fill="#d3d3d3" stroke="#9c9c9c" stroke-width="1"/>
 <path d="M441.4 96 V104 M441.4 120 V125 M462.4 101.3 V125 M449 96 L462.4 101.3 L471 97.7" fill="none" stroke="#9c9c9c" stroke-width="1"/>
 <path d="M431.3 104.2 L447.1 101.3 L457.4 104.7 V119.5 L445.4 122.2 L431.3 118.3 Z" fill="#d9d9d9" stroke="#9c9c9c" stroke-width="1"/>
 <path d="M431.3 104.2 L445.4 108.5 L457.4 104.7 M445.4 108.5 V122.2" fill="none" stroke="#9c9c9c" stroke-width="1"/>
 <!-- sphere -->
 <circle cx="535.9" cy="113.8" r="14.3" fill="url(#gsph)" stroke="#9b6cb4" stroke-width="1"/>
 <g fill="none" stroke="#a57cbf" stroke-width="0.9">
  <path d="M523 106 Q535.9 100 548.8 106"/>
  <path d="M522.5 120.5 Q535.9 126 549.3 120.5"/>
  <path d="M535.6 115.7 L528.7 111.9 M535.6 115.7 L542.9 111.9 M535.6 115.7 V128"/>
  <path d="M528.7 111.9 Q530 104 535.9 100 M542.9 111.9 Q542 104 535.9 100"/>
  <path d="M528.7 111.9 L523 108.5 M528.7 111.9 Q527.5 122 531 127.5 M542.9 111.9 L548.8 108.5 M542.9 111.9 Q544.3 122 541 127.5"/>
 </g>
 <!-- box extrude -->
 <path d="M563.5 104.2 L568.2 99.3 H585.5 V124.2 L580.6 128.3 H563.5 Z" fill="#b3c7df"/>
 <path d="M563.5 104.2 L568.2 99.3 H585.5 L580.6 104.2 Z" fill="#d7e3ef"/>
 <path d="M580.6 104.2 L585.5 99.3 V124.2 L580.6 128.3 Z" fill="#9cb1cd"/>
 <rect x="564" y="124.5" width="16.4" height="3.5" fill="#d6dae2"/>
 <path d="M563.5 104.2 L568.2 99.3 H585.5 V124.2 L580.6 128.3 H563.5 Z M563.5 104.2 H580.6 L585.5 99.3 M580.6 104.2 V128.3" fill="none" stroke="#6e819d" stroke-width="1"/>
 <path d="M590.5 126 V103.5 M588 106 L590.5 103.2 L593 106" fill="none" stroke="#777" stroke-width="1.1"/>
 <!-- cylinder -->
 <path d="M606.3 103.9 V123.5 A14.8 4.6 0 0 0 635.8 123.5 V103.9 Z" fill="url(#gcyl)" stroke="#6f809a" stroke-width="1"/>
 <ellipse cx="621" cy="103.9" rx="14.7" ry="4.6" fill="#d8e4ef" stroke="#6f809a" stroke-width="1"/>
 <!-- surface -->
 <path d="M649.2 114.9 L662.2 119.6 V127.5 L649.2 122.4 Z" fill="#b7cbe4" stroke="#6f809a" stroke-width="0.9"/>
 <path d="M662.2 119.6 C668 118 672 110 678.4 109 V116.8 C672 118 668 126 662.2 127.5 Z" fill="#a9bfdc" stroke="#6f809a" stroke-width="0.9"/>
 <path d="M649.2 114.9 L665 103.5 L678.4 109 C672 110 668 118 662.2 119.6 Z" fill="url(#gsrf)" stroke="#6f7480" stroke-width="0.9"/>
 <!-- mirror -->
 <path d="M693.3 102.3 H696.5 L702.4 108.2 V118.4 H698.5 V126.3 H693.3 Z" fill="url(#gwht)" stroke="#7a7a7a" stroke-width="1"/>
 <path d="M706.5 99.1 V128.7" stroke="#6a6a6a" stroke-width="1"/>
 <path d="M719.7 102.3 H716.6 L710.3 108.2 V118.4 H714.2 V126.3 H719.7 Z" fill="#b6c9e2" stroke="#6f809a" stroke-width="1"/>
 <!-- modify -->
 <path d="M753.6 106.1 L760.5 99.4 H765 L758.7 106.1 V128.4 H753.6 Z" fill="#eeeff2" stroke="#777" stroke-width="1"/>
 <path d="M758.7 106.1 L764.6 99.4 H779.8 V120.4 L771.7 128.4 H758.7 Z" fill="#b3c7df" stroke="#6e819d" stroke-width="1"/>
 <path d="M758.7 106.1 L764.6 99.4 H779.8 L771.7 106.5 Z" fill="#d6e2ee"/>
 <path d="M771.7 106.5 L779.8 99.4 V120.4 L771.7 128.4 Z" fill="#9db2ce"/>
 <path d="M758.7 106.1 H771.7 L779.8 99.4 M771.7 106.5 V128.4" fill="none" stroke="#6e819d" stroke-width="0.9"/>
 <path d="M775 111.8 H779 V109.8 L783 113 L779 116.2 V114.2 H775 Z" fill="#6f6f6f"/>
 <!-- joint 1 -->
 <path d="M819.3 110.3 L826.8 102.6 V120.8 L819.6 126.6 Z" fill="url(#gjnt)" stroke="#6e6e6e" stroke-width="1.1" stroke-linejoin="round"/>
 <path d="M837.4 110.3 L830.2 102.6 V120.8 L837.4 126.6 Z" fill="url(#gjnt)" stroke="#6e6e6e" stroke-width="1.1" stroke-linejoin="round"/>
 <path d="M821.8 109.5 V123.5 M834.9 109.5 V123.5" stroke="#a8a9ad" stroke-width="0.8"/>
 <path d="M826.6 102.2 H830.4 V113.8 H826.6 Z" fill="#dcdde0" stroke="#6e6e6e" stroke-width="1"/>
 <path d="M826.6 113.8 H830.4 V122.4 H826.6 Z" fill="#c9cacd" stroke="#6e6e6e" stroke-width="1"/>
 <ellipse cx="828.5" cy="102.3" rx="2.1" ry="1.3" fill="#f4f4f4" stroke="#6e6e6e" stroke-width="0.9"/>
 <circle cx="828.5" cy="102.3" r="0.6" fill="#555"/>
 <!-- joint 2 -->
 <path d="M858.4 110.3 L865.6 102.6 V120.8 L858.6 126.6 Z" fill="url(#gjnt)" stroke="#6e6e6e" stroke-width="1.1" stroke-linejoin="round"/>
 <path d="M860.8 109.5 V123.5" stroke="#a8a9ad" stroke-width="0.8"/>
 <path d="M865.4 102.2 H870.4 V113.6 H865.4 Z" fill="#d6d7da" stroke="#6e6e6e" stroke-width="1"/>
 <ellipse cx="867.9" cy="102.3" rx="2.5" ry="1.4" fill="#f4f4f4" stroke="#6e6e6e" stroke-width="0.9"/>
 <circle cx="867.9" cy="102.3" r="0.6" fill="#555"/>
 <path d="M885.8 112.9 L878.3 105.6 V120.8 L885.8 127.5 Z" fill="url(#gjnt)" stroke="#6e6e6e" stroke-width="1.1" stroke-linejoin="round"/>
 <path d="M883.3 111.5 V124.8" stroke="#a8a9ad" stroke-width="0.8"/>
 <path d="M872.9 111 H878.1 V122.4 H872.9 Z" fill="#d6d7da" stroke="#6e6e6e" stroke-width="1"/>
 <ellipse cx="875.5" cy="111" rx="2.6" ry="1.4" fill="#f0f0f0" stroke="#6e6e6e" stroke-width="0.9"/>
 <path d="M867.6 114.6 V120.2 M875.5 106.8 V112.6" stroke="#f08a30" stroke-width="0.9"/>
 <!-- sketch 1 -->
 <path d="M918 122.8 H934 M934.2 106 A10.8 8.4 0 0 1 934.2 122.8" fill="none" stroke="#7a7a7a" stroke-width="1.1"/>
 <rect x="916.1" y="121" width="4" height="4" fill="#6a97dd"/><rect x="932.1" y="121" width="4" height="4" fill="#6a97dd"/><rect x="932.1" y="103.8" width="4" height="4" fill="#6a97dd"/>
 <!-- sketch 2 -->
 <path d="M965.5 106.3 V122.3 M963 119.8 L965.5 122.5 L968 119.8 M966.9 127.5 H987" fill="none" stroke="#777" stroke-width="1"/>
 <rect x="964" y="100.1" width="3" height="3" fill="#e8603a"/><rect x="964" y="126" width="3" height="3" fill="#e8603a"/>
 <!-- dimension -->
 <path d="M1002.4 101 V128.8 M1031.6 101 V128.8 M1004 110.4 H1030" fill="none" stroke="#777" stroke-width="1.1"/><path d="M1003 110.4 L1006.5 108.2 V112.6 Z M1031 110.4 L1027.5 108.2 V112.6 Z" fill="#777"/>
 <!-- construct -->
 <path d="M1075.3 107.1 L1082.2 100.2 H1092.6 V122.1 L1085.3 128.2 H1075.3 Z" fill="#d8dce4" stroke="#6d6d6d" stroke-width="1"/>
 <path d="M1075.8 107 L1082.2 100.7 H1092.2 L1085.3 107 Z" fill="#eeeeef"/>
 <path d="M1085.3 107.1 L1092.6 100.2 V122.1 L1085.3 128.2 Z" fill="#8fb585" stroke="#6d6d6d" stroke-width="0.9"/>
 <path d="M1096.1 108.2 L1104.9 100.2 V120.5 L1096.1 128.6 Z" fill="#e9b38d" stroke="#a06c4a" stroke-width="1"/>
 <!-- inspect -->
 <path d="M1151.4 109.4 H1179.5 M1151.4 107 V111.8 M1179.5 107 V111.8" fill="none" stroke="#777" stroke-width="1.1"/>
 <rect x="1151.5" y="117.4" width="28.2" height="5.2" rx="0.8" fill="#e8d06c" stroke="#c0904a" stroke-width="0.9"/>
 <path d="M1154 117.5 V119 M1157 117.5 V119 M1160 117.5 V119 M1163 117.5 V119 M1166 117.5 V119 M1169 117.5 V119 M1172 117.5 V119 M1175 117.5 V119 M1178 117.5 V119" stroke="#c0904a" stroke-width="0.7"/>
 <!-- insert -->
 <rect x="1213.6" y="99.5" width="29" height="28.8" rx="0.8" fill="url(#gsky)" stroke="#707070" stroke-width="1.2"/>
 <path d="M1226 127.8 L1233.9 114.6 L1242 119.4 V127.8 Z" fill="#b3b7bf"/>
 <path d="M1214.2 127.8 V118.6 L1222.8 113.1 L1241.5 127.8 Z" fill="#9a9ea6"/>
 <path d="M1222.8 113.1 C1226 117 1224 121 1227 127.8 L1241.5 127.8 Z" fill="#a9adb5"/>
 <path d="M1222.8 113.1 L1241.6 127.6" fill="none" stroke="#eee8d0" stroke-width="0.8"/>
 <circle cx="1234" cy="107" r="2.4" fill="#eeeef2" stroke="#f0d890" stroke-width="0.9"/>
 <!-- select -->
 <rect x="1272.4" y="99.4" width="20.2" height="14.2" fill="none" stroke="#7fb74f" stroke-width="1.5"/>
 <path d="M1292.4 113.6 V125.8 L1295 123.3 L1297.4 128.4 L1299.4 127.6 L1297.2 122.5 H1301.5 Z" fill="#e4e6ea" stroke="#6f6f6f" stroke-width="0.9" stroke-linejoin="round"/>
</svg>
<div style="left:404px;top:156px;width:300px;height:25px;background:#d4d4d4;border:1px solid #a6a6a6;border-left-color:#b0b0b0"></div>
<svg style="left:404px;top:156px" width="300" height="25" viewBox="404 156 300 25">
 <path d="M409 169 L414 165.8 V172.2 Z M414 169 L419 165.8 V172.2 Z" fill="#2f2f2f"/>
 <circle cx="687.5" cy="168.4" r="4.6" fill="#2a2a2a"/>
 <rect x="684.6" y="167.6" width="5.8" height="1.6" fill="#e0e0e0"/>
 <rect x="699" y="163" width="1" height="11" fill="#8a8a8a"/><rect x="701" y="165" width="1" height="7" fill="#8a8a8a"/>
</svg>
<div class="t" style="left:431px;top:163px;font-size:11px;color:#4f4f4f;-webkit-text-stroke:0.25px #4f4f4f;transform:scaleX(0.895);transform-origin:0 0">BROWSER</div>
<div style="left:444px;top:186px;width:50px;height:20px;background:#dcdcdc"></div>
<div style="left:494px;top:186px;width:73px;height:20px;background:#c4dcf6"></div>
<div style="left:462px;top:210px;width:114px;height:20px;background:#dcdcdc"></div>
<div style="left:464px;top:234px;width:98px;height:20px;background:#dcdcdc"></div>
<div style="left:462px;top:258px;width:99px;height:20px;background:#dcdcdc"></div>
<div class="t" style="left:502px;top:190px;font-size:12px;color:#4a68a8">(Unsaved)</div>
<div class="t" style="left:495px;top:215px;font-size:12px;color:#777;letter-spacing:-0.2px">Named Views</div>
<div class="t" style="left:497px;top:238.5px;font-size:12px;color:#777;letter-spacing:0.25px">Units: mm</div>
<div class="t" style="left:520px;top:263px;font-size:12px;color:#777;letter-spacing:0.4px">Origin</div>
<svg style="left:415px;top:185px" width="100" height="95" viewBox="415 185 100 95">
 <defs>
  <radialGradient id="gbulb" cx="0.45" cy="0.4" r="0.6"><stop offset="0" stop-color="#fff8c0"/><stop offset="1" stop-color="#e8cf50"/></radialGradient>
  <radialGradient id="gbulb2" cx="0.45" cy="0.4" r="0.6"><stop offset="0" stop-color="#eef2fa"/><stop offset="1" stop-color="#a8bce0"/></radialGradient>
  <linearGradient id="gfold" x1="0" y1="0" x2="0" y2="1"><stop offset="0" stop-color="#f4f4f4"/><stop offset="1" stop-color="#d4d4d4"/></linearGradient>
 </defs>
 <path d="M429.2 192.8 V199.4 H422.7 Z" fill="#555"/>
 <circle cx="454.6" cy="194.3" r="4.6" fill="url(#gbulb)" stroke="#d8c060" stroke-width="0.5"/>
 <rect x="452.6" y="198.5" width="4" height="4" rx="0.8" fill="#9a9a9a"/>
 <path d="M473.3 191 L476.3 188.5 H488.7 V201 L485.8 203.6 H473.3 Z" fill="#e2e2e2" stroke="#6f6f6f" stroke-width="1" stroke-linejoin="round"/>
 <path d="M473.3 191 H485.8 L488.7 188.5 M485.8 191 V203.6" fill="none" stroke="#8a8a8a" stroke-width="0.8"/>
 <path d="M442 216.3 L446.8 220.2 L442 224.1 Z" fill="none" stroke="#444" stroke-width="1.1" stroke-linejoin="round"/>
 <path d="M465.3 214.5 H471.5 L472.5 215.8 H479.5 V226.3 H465.3 Z" fill="url(#gfold)" stroke="#6f6f6f" stroke-width="1"/>
 <path d="M465.3 217.2 H479.5" stroke="#6f6f6f" stroke-width="0.9"/>
 <path d="M467.6 236.3 H476.3 L481.3 240.7 V252 H467.6 Z" fill="url(#gfold)" stroke="#6f6f6f" stroke-width="1"/>
 <path d="M476.3 236.3 V240.7 H481.3" fill="none" stroke="#6f6f6f" stroke-width="0.9"/>
 <rect x="467.4" y="248.4" width="14.2" height="3.8" rx="0.6" fill="#e8c040" stroke="#c09030" stroke-width="0.7"/>
 <path d="M442 264.1 L446.8 268 L442 271.9 Z" fill="none" stroke="#444" stroke-width="1.1" stroke-linejoin="round"/>
 <circle cx="472.1" cy="266.5" r="4.6" fill="url(#gbulb2)" stroke="#a0b0d0" stroke-width="0.5"/>
 <rect x="470.1" y="270.6" width="4" height="4" rx="0.8" fill="#9a9a9a"/>
 <path d="M490.3 262.5 H496.5 L497.5 263.8 H504.5 V274.3 H490.3 Z" fill="url(#gfold)" stroke="#6f6f6f" stroke-width="1"/>
 <path d="M490.3 265.2 H504.5" stroke="#6f6f6f" stroke-width="0.9"/>
</svg>
<div style="left:949px;top:474px;width:634px;height:379px;border:2px solid #232623;background:#f3f4f6;box-shadow:0 3px 12px rgba(0,0,0,0.28)">
 
</div>
<div class="t" style="left:967px;top:488px;font-size:23px;color:#555555">Select files to upload</div>
<svg style="left:1551px;top:492px" width="15" height="15" viewBox="0 0 15 15"><path d="M2.3 2.3 L12.7 12.7 M12.7 2.3 L2.3 12.7" stroke="#34322f" stroke-width="3.2" stroke-linecap="butt"/></svg>
<div style="left:961px;top:526px;width:611px;height:1px;background:#dfe1e3"></div>
<div style="left:981px;top:583px;width:105px;height:30px;background:#e6e7e9;border:1px solid #c8c9ca"></div>
<div class="t" style="left:992px;top:591px;font-size:16px;color:#3d72b0">Select Files</div>
<div class="t" style="left:1099px;top:592px;font-size:13px;font-weight:bold;color:#555">or</div>
<div style="left:1127px;top:546px;width:424px;height:109px;background:#e4e4e4;border:2px solid #c3c3c3"></div>
<svg style="left:1295px;top:562px" width="90" height="56" viewBox="0 0 90 56">
 <g transform="translate(5.5,18.6) rotate(-20)">
  <path d="M0.7 0.7 H19 L26.5 8 V32.3 H0.7 Z" fill="#e4e4e4" stroke="#9a9a9a" stroke-width="1.4"/>
  <path d="M19 0 L27.2 8 L27.2 9.5 L19.5 9.5 Z" fill="#9a9a9a"/>
  <rect x="0" y="24" width="27.2" height="9" fill="#9a9a9a"/>
  <path d="M7.6 6.6 H18.4 V10.2 H14.8 V18.4 H18.8 V22 H8 V18.4 H11.2 V10.2 H7.6 Z" fill="#9a9a9a"/>
 </g>
 <path d="M30.8 4.8 H52 L57.6 11.4 V40 H30.8 Z" fill="#e4e4e4"/>
 <path d="M32.5 6.5 H51.5 V14.5 H57 L57 38.8 H32.5 Z" fill="#e4e4e4" stroke="#9a9a9a" stroke-width="1.3"/>
 <path d="M51.5 5.9 L56.8 12.2 V14.8 H51.5 Z" fill="#9a9a9a"/>
 <path d="M32 12.3 H51.5 M38.5 6 V22.2" stroke="#9a9a9a" stroke-width="1"/>
 <rect x="35.6" y="9.5" width="5.8" height="5.8" fill="#e4e4e4" stroke="#9a9a9a" stroke-width="1"/>
 <rect x="38" y="12" width="1" height="1" fill="#9a9a9a"/>
 <path d="M31.9 22.2 H38.5 L51.5 28.3 L47.9 39.4 H31.9 Z" fill="#9a9a9a"/>
 <g transform="translate(59.3,10.8) rotate(20)">
  <path d="M-1.2 -1.2 H20 L29.2 8 V34.2 H-1.2 Z" fill="#e4e4e4"/>
  <path d="M0 0 H19.5 L28 8.5 V33 H0 Z" fill="#9a9a9a"/>
  <path d="M19.5 0 V8.5 H28" stroke="#e4e4e4" stroke-width="0.9" fill="none"/>
  <rect x="4.6" y="7.2" width="21.5" height="16.3" fill="#9a9a9a" stroke="#e4e4e4" stroke-width="1"/>
  <path d="M6.5 21.5 L7.5 15.5 L11.5 13 L16.5 21.5 Z" fill="#e4e4e4"/>
  <path d="M16 21.5 L18 18.2 L21 21.5 Z" fill="#e4e4e4"/>
  <circle cx="20.8" cy="11.8" r="1.6" fill="#e4e4e4"/>
 </g>
</svg>

<div class="t" style="left:1278px;top:618px;font-size:13px;font-weight:bold;color:#8a8a8a">Drag and Drop Here</div>
<div style="left:961px;top:682px;width:611px;height:1px;background:#dfe1e3"></div>
<div class="t" style="left:972px;top:710px;font-size:13px;font-weight:bold;color:#555">Uploading to</div>
<svg style="left:1405px;top:700px" width="35" height="30" viewBox="1405 700 35 30">
 <path d="M1411.1 707.2 H1417 Q1418 707.2 1418 708.7 H1411.1 Z" fill="#4571ad"/>
 <path d="M1411.1 710.1 H1418.8 L1420.6 708.2 H1427.9 V715.2 L1426.2 714 L1422.6 717.6 L1423.9 718.6 H1418.8 V720.8 H1411.1 Z" fill="#4571ad"/>
 <path d="M1420 721 H1429.5 M1425.5 717 L1429.9 721 L1425.5 725.1" fill="none" stroke="#4571ad" stroke-width="1.9"/>
</svg>
<div class="t" style="left:1441px;top:710px;font-size:13px;color:#3f6cab">Change destination</div>
<div style="left:969px;top:740px;width:594px;height:35px;background:#e4e4e4"></div>
<div class="t" style="left:982px;top:750px;font-size:13px;font-weight:bold;color:#555">Jamie's First Project &gt; Fasteners</div>
<div style="left:951px;top:797px;width:630px;height:54px;background:#e5e6e8"></div>
<div style="left:951px;top:476px;width:630px;height:375px;border:1px solid #ffffff"></div>
<div style="left:1406px;top:809px;width:73px;height:30px;background:#8fb3dc;border:1px solid #c9d2dc"></div>
<div class="t" style="left:1417px;top:817px;font-size:16px;color:#ffffff">Upload</div>
<div style="left:1489px;top:809px;width:72px;height:30px;background:#e8e9eb;border:1px solid #cdcdcd"></div>
<div class="t" style="left:1500px;top:817px;font-size:16px;color:#3f6cab">Cancel</div>
<svg style="left:1568px;top:839px" width="12" height="12" viewBox="0 0 12 12"><path d="M1 11 L11 1 M5 11 L11 5 M9 11 L11 9" stroke="#555" stroke-width="1" stroke-dasharray="1 0.6"/></svg>
<svg style="left:291.5px;top:86px" width="16" height="20" viewBox="0 0 16 20"><path d="M2 1.3 V16.2 L5.6 12.8 L8.3 18.6 L10.7 17.6 L8.1 11.8 H13 Z" fill="#000" stroke="#fff" stroke-width="1" stroke-linejoin="round"/></svg>
</body></html>
